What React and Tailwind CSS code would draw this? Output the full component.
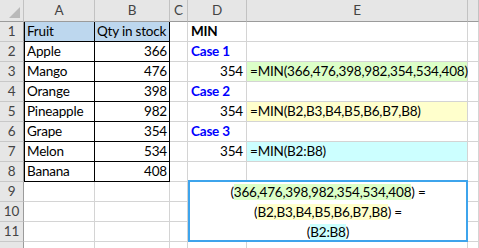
import React from "react";

// Excel-like sheet with MIN examples
const hdr = "bg-[#e6e6e6] border-r border-b border-r-[#c2c2c2] border-b-[#9b9b9b] text-[#444] flex items-center justify-center";
const rowHdr = "bg-[#e6e6e6] border-r border-b border-r-[#9b9b9b] border-b-[#c8c8c8] text-[#444] flex items-center justify-center";
const cell = "border-r border-b border-[#d4d4d4] flex items-center px-[3px] whitespace-nowrap overflow-visible";

const fruits = [
  ["Apple", 366],
  ["Mango", 476],
  ["Orange", 398],
  ["Pineapple", 982],
  ["Grape", 354],
  ["Melon", 534],
  ["Banana", 408],
];

const dCol = {
  1: <span className="font-bold text-black">MIN</span>,
  2: <span className="font-bold text-[#0000ff]">Case 1</span>,
  3: "354",
  4: <span className="font-bold text-[#0000ff]">Case 2</span>,
  5: "354",
  6: <span className="font-bold text-[#0000ff]">Case 3</span>,
  7: "354",
};

const App = () => {
  const rows = [];
  for (let r = 1; r <= 12; r++) {
    const fruit = r >= 2 && r <= 8 ? fruits[r - 2] : null;
    const inTable = r <= 8;
    const numeric = r === 3 || r === 5 || r === 7;

    rows.push(
      <React.Fragment key={r}>
        <div className={rowHdr}>{r < 12 ? r : ""}</div>

        {/* A */}
        {inTable ? (
          <div className={`border-l border-r border-b border-black flex items-center px-[2px] whitespace-nowrap ${r === 1 ? "bg-[#bdd7ee]" : "bg-white"}`}>
            {r === 1 ? "Fruit" : fruit[0]}
          </div>
        ) : (
          <div className={cell}></div>
        )}

        {/* B */}
        {inTable ? (
          <div className={`border-r border-b border-black flex items-center px-[2px] whitespace-nowrap ${r === 1 ? "bg-[#bdd7ee] justify-start" : "bg-white justify-end"}`}>
            {r === 1 ? "Qty in stock" : fruit[1]}
          </div>
        ) : (
          <div className={cell}></div>
        )}

        {/* C */}
        <div className={cell}></div>

        {/* D */}
        <div className={`${cell} ${numeric ? "justify-end" : "justify-start"}`}>{dCol[r]}</div>

        {/* E */}
        {r === 3 ? (
          <div className="bg-[#dcffc8] border-r border-b border-[#d4d4d4] flex items-center px-[3px] whitespace-nowrap">=MIN(366,476,398,982,354,534,408)</div>
        ) : r === 5 ? (
          <div className="bg-[#ffffcc] border-r border-b border-[#d4d4d4] flex items-center px-[3px] whitespace-nowrap">=MIN(B2,B3,B4,B5,B6,B7,B8)</div>
        ) : r === 7 ? (
          <div className="bg-[#ccffff] border-r border-b border-[#d4d4d4] flex items-center px-[3px] whitespace-nowrap">=MIN(B2:B8)</div>
        ) : (
          <div className={cell}></div>
        )}

        {/* F (partial) */}
        <div className={cell}></div>
      </React.Fragment>
    );
  }

  return (
    <div className="relative w-[479px] h-[248px] overflow-hidden bg-white font-[Lato,sans-serif] text-[13.5px] tracking-[-0.2px] text-black">
      <div className="grid grid-cols-[24px_71px_75px_18px_59px_221px_1fr] grid-rows-[22px_repeat(12,20px)]">
        {/* corner */}
        <div className="bg-[#e6e6e6] border-r border-b border-r-[#c2c2c2] border-b-[#9b9b9b] flex items-end justify-end p-[3px]">
          <svg width="11" height="11" viewBox="0 0 11 11">
            <polygon points="11,0 11,11 0,11" fill="#b9b9b9" />
          </svg>
        </div>
        {["A", "B", "C", "D", "E"].map((c) => (
          <div key={c} className={hdr}>{c}</div>
        ))}
        <div className={hdr}></div>
        {rows}
      </div>

      {/* text box overlay */}
      <div className="absolute left-[188px] top-[180px] w-[280px] h-[62px] border-2 border-[#3ea4ec] bg-white flex flex-col items-center leading-[20px] whitespace-nowrap">
        <div>
          (<span className="bg-[#dcffc8]">366,476,398,982,354,534,408</span>) =
        </div>
        <div>
          (<span className="bg-[#ffffcc]">B2,B3,B4,B5,B6,B7,B8</span>) =
        </div>
        <div>
          (<span className="bg-[#ccffff]">B2:B8</span>)
        </div>
      </div>
    </div>
  );
};

export default App;
